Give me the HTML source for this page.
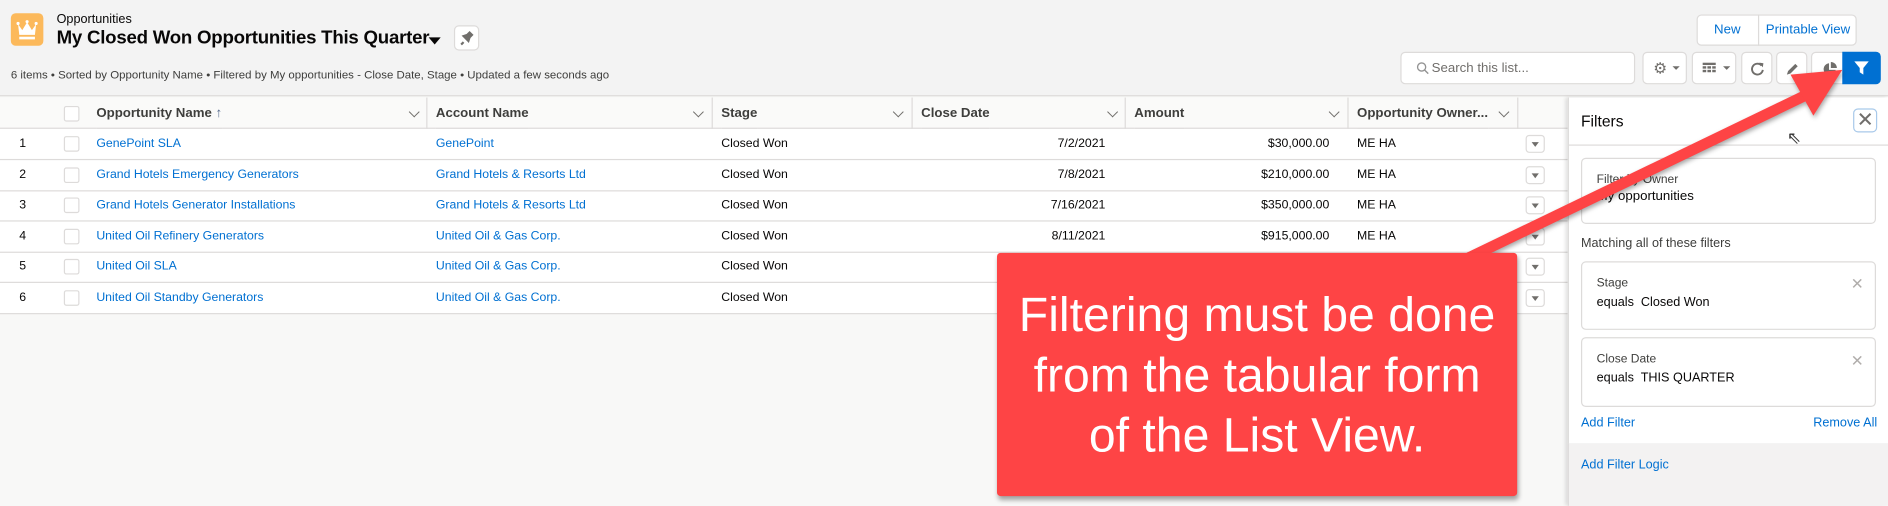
<!DOCTYPE html>
<html><head><meta charset="utf-8"><style>
*{box-sizing:border-box;margin:0;padding:0}
html,body{width:1888px;height:505px;overflow:hidden;background:#f8f8f7}
#w{position:absolute;left:0;top:0;width:1568px;height:420px;transform:scale(1.2041);transform-origin:0 0;font-family:"Liberation Sans",sans-serif;color:#080707;font-size:10.5px;background:#f8f8f7}
.a{position:absolute}
.hdr{left:0;top:0;width:1568px;height:80px;background:#f3f3f3;border-bottom:1px solid #dddbda}
.btn{position:absolute;background:#fff;border:1px solid #dddbda;border-radius:4px}
.lnk{color:#0070d2}
.tbl{left:0;top:81px;width:1302px;height:180px;background:#fff}
.th{position:absolute;top:0;height:26px;background:#fafaf9;border-bottom:1px solid #dddbda;font-weight:bold;color:#3e3e3c;font-size:11px;line-height:26px}
.row{position:absolute;left:0;width:1302px;height:26px;border-bottom:1px solid #dddbda;line-height:25px;font-size:10.2px}
.cb{position:absolute;left:53px;top:6px;width:13px;height:13px;border:1px solid #dddbda;border-radius:2px;background:#fff}
.dd{position:absolute;left:1267px;top:5px;width:16px;height:15px;border:1px solid #dddbda;border-radius:3px;background:#fff}
.dd:after{content:"";position:absolute;left:4px;top:5px;border-left:3.5px solid transparent;border-right:3.5px solid transparent;border-top:4px solid #706e6b}
.card{position:absolute;left:1313px;width:245px;background:#fff;border:1px solid #dddbda;border-radius:4px;padding:0 12px}
.chev{position:absolute;top:8px;width:8px;height:8px;border-right:1.2px solid #706e6b;border-bottom:1.2px solid #706e6b;transform:rotate(45deg) scale(.8)}
.sep{position:absolute;top:0;width:1px;height:26px;background:#dddbda}
</style></head><body><div id="w">
<div class="a hdr"></div>
<div class="a" style="left:9px;top:11px;width:27px;height:27px;background:#fcb95b;border-radius:4px">
<svg width="27" height="27" viewBox="0 0 27 27"><path d="M6 9 L9.5 14 L13.5 7.5 L17.5 14 L21 9 L20 18 L7 18 Z" fill="#fff"/><rect x="7" y="19.5" width="13" height="2.2" fill="#fff"/><circle cx="6" cy="8.5" r="1.3" fill="#fff"/><circle cx="13.5" cy="7" r="1.3" fill="#fff"/><circle cx="21" cy="8.5" r="1.3" fill="#fff"/></svg></div>
<div class="a" style="left:47px;top:10px;font-size:10.5px">Opportunities</div>
<div class="a" style="left:47px;top:23px;font-size:15.5px;font-weight:bold;letter-spacing:-.2px">My Closed Won Opportunities This Quarter</div>
<div class="a" style="left:356px;top:31px;border-left:5px solid transparent;border-right:5px solid transparent;border-top:6px solid #080707"></div>
<div class="btn" style="left:377px;top:21px;width:21px;height:21px"><svg width="19" height="19" viewBox="0 0 19 19"><path d="M7 13 L5 15 M7 8 L11 12 L12 9 L14 7 L12 5 L10 7 Z" stroke="#706e6b" stroke-width="1.8" fill="#706e6b"/></svg></div>
<div class="a" style="left:9px;top:57px;font-size:9.5px;color:#3e3e3c">6 items • Sorted by Opportunity Name • Filtered by My opportunities - Close Date, Stage • Updated a few seconds ago</div>
<div class="btn" style="left:1409px;top:12px;width:133px;height:26px"></div>
<div class="a" style="left:1460px;top:12px;width:1px;height:26px;background:#dddbda"></div>
<div class="a lnk" style="left:1409px;top:19px;width:51px;text-align:center;font-size:11px">New</div>
<div class="a lnk" style="left:1461px;top:19px;width:81px;text-align:center;font-size:11px">Printable View</div>
<div class="btn" style="left:1163px;top:43px;width:195px;height:27px"></div>
<svg class="a" style="left:1176px;top:51px" width="11" height="11" viewBox="0 0 13 13"><circle cx="5.5" cy="5.5" r="4" stroke="#939393" stroke-width="1.3" fill="none"/><path d="M8.5 8.5 L12 12" stroke="#939393" stroke-width="1.4"/></svg>
<div class="a" style="left:1189px;top:51px;font-size:11px;color:#706e6b">Search this list...</div>
<div class="btn" style="left:1364px;top:43px;width:37px;height:27px"><span class="a" style="left:8px;top:5px;font-size:13px;color:#706e6b">⚙</span><span class="a" style="left:24px;top:11px;border-left:3px solid transparent;border-right:3px solid transparent;border-top:3px solid #706e6b"></span></div>
<div class="btn" style="left:1405px;top:43px;width:37px;height:27px"><svg class="a" style="left:8px;top:8px" width="11" height="10"><g fill="#706e6b"><rect x="0" y="0" width="11" height="2"/><rect x="0" y="3" width="3" height="2"/><rect x="4" y="3" width="3" height="2"/><rect x="8" y="3" width="3" height="2"/><rect x="0" y="6" width="3" height="2"/><rect x="4" y="6" width="3" height="2"/><rect x="8" y="6" width="3" height="2"/></g></svg><span class="a" style="left:25px;top:11px;border-left:3px solid transparent;border-right:3px solid transparent;border-top:3px solid #706e6b"></span></div>
<div class="btn" style="left:1446px;top:43px;width:26px;height:27px"><svg class="a" style="left:6px;top:7px" width="13" height="13" viewBox="0 0 13 13"><path d="M10 3.5 A4.5 4.5 0 1 0 11 7" stroke="#706e6b" stroke-width="1.6" fill="none"/><path d="M8 1 L11.5 1.5 L11 5 Z" fill="#706e6b"/></svg></div>
<div class="btn" style="left:1475px;top:43px;width:26px;height:27px"><svg class="a" style="left:7px;top:7px" width="12" height="12"><path d="M1 11 L2 8 L8 2 L10 4 L4 10 Z" fill="#706e6b"/></svg></div>
<div class="btn" style="left:1504px;top:43px;width:30px;height:27px"><svg class="a" style="left:8px;top:7px" width="13" height="13"><path d="M6 1.5 A5 5 0 1 0 11.5 7 L6 7 Z" fill="#706e6b"/><path d="M7.5 0.5 A5 5 0 0 1 12.5 5.5 L7.5 5.5 Z" fill="#706e6b"/></svg></div>
<div class="a" style="left:1530px;top:43px;width:32px;height:27px;background:#0070d2;border-radius:0 4px 4px 0"><svg class="a" style="left:10px;top:7px" width="12" height="13"><path d="M0 1 L12 1 L7.5 6.5 L7.5 12 L4.5 10 L4.5 6.5 Z" fill="#fff"/></svg></div>

<div class="a tbl">
<div class="th" style="left:0;width:1302px"></div>
<div class="cb" style="top:7px"></div>
<div class="th" style="left:80px">Opportunity Name <span style="color:#54698d">↑</span></div><div class="chev" style="left:340px"></div><div class="sep" style="left:354px"></div>
<div class="th" style="left:362px">Account Name</div><div class="chev" style="left:576px"></div><div class="sep" style="left:591px"></div>
<div class="th" style="left:599px">Stage</div><div class="chev" style="left:742px"></div><div class="sep" style="left:757px"></div>
<div class="th" style="left:765px">Close Date</div><div class="chev" style="left:920px"></div><div class="sep" style="left:934px"></div>
<div class="th" style="left:942px">Amount</div><div class="chev" style="left:1104px"></div><div class="sep" style="left:1119px"></div>
<div class="th" style="left:1127px">Opportunity Owner...</div><div class="chev" style="left:1245px"></div><div class="sep" style="left:1260px"></div>
</div>
<div class="a" style="left:0;top:107px;width:1302px">
<div class="row" style="top:0"><span class="a" style="left:16px">1</span><div class="cb"></div><span class="a lnk" style="left:80px">GenePoint SLA</span><span class="a lnk" style="left:362px">GenePoint</span><span class="a" style="left:599px">Closed Won</span><span class="a" style="right:384px">7/2/2021</span><span class="a" style="right:198px">$30,000.00</span><span class="a" style="left:1127px">ME HA</span><div class="dd"></div></div>
<div class="row" style="top:25.5px"><span class="a" style="left:16px">2</span><div class="cb"></div><span class="a lnk" style="left:80px">Grand Hotels Emergency Generators</span><span class="a lnk" style="left:362px">Grand Hotels &amp; Resorts Ltd</span><span class="a" style="left:599px">Closed Won</span><span class="a" style="right:384px">7/8/2021</span><span class="a" style="right:198px">$210,000.00</span><span class="a" style="left:1127px">ME HA</span><div class="dd"></div></div>
<div class="row" style="top:51px"><span class="a" style="left:16px">3</span><div class="cb"></div><span class="a lnk" style="left:80px">Grand Hotels Generator Installations</span><span class="a lnk" style="left:362px">Grand Hotels &amp; Resorts Ltd</span><span class="a" style="left:599px">Closed Won</span><span class="a" style="right:384px">7/16/2021</span><span class="a" style="right:198px">$350,000.00</span><span class="a" style="left:1127px">ME HA</span><div class="dd"></div></div>
<div class="row" style="top:76.5px"><span class="a" style="left:16px">4</span><div class="cb"></div><span class="a lnk" style="left:80px">United Oil Refinery Generators</span><span class="a lnk" style="left:362px">United Oil &amp; Gas Corp.</span><span class="a" style="left:599px">Closed Won</span><span class="a" style="right:384px">8/11/2021</span><span class="a" style="right:198px">$915,000.00</span><span class="a" style="left:1127px">ME HA</span><div class="dd"></div></div>
<div class="row" style="top:102px"><span class="a" style="left:16px">5</span><div class="cb"></div><span class="a lnk" style="left:80px">United Oil SLA</span><span class="a lnk" style="left:362px">United Oil &amp; Gas Corp.</span><span class="a" style="left:599px">Closed Won</span><div class="dd"></div></div>
<div class="row" style="top:127.5px"><span class="a" style="left:16px">6</span><div class="cb"></div><span class="a lnk" style="left:80px">United Oil Standby Generators</span><span class="a lnk" style="left:362px">United Oil &amp; Gas Corp.</span><span class="a" style="left:599px">Closed Won</span><div class="dd"></div></div>
</div>

<div class="a" style="left:1302px;top:81px;width:266px;height:339px;background:#fff;border-left:1px solid #dddbda;box-shadow:-2px 0 3px rgba(0,0,0,.12)"></div>
<div class="a" style="left:1302px;top:368px;width:266px;height:52px;background:#f3f2f2;border-left:1px solid #dddbda"></div>
<div class="a" style="left:1313px;top:93px;font-size:13px">Filters</div>
<div class="a" style="left:1303px;top:120px;width:265px;height:1px;background:#dddbda"></div>
<div class="a" style="left:1539px;top:90px;width:20px;height:20px;border:1px solid #a8c9ea;border-radius:4px;background:#fff;color:#706e6b;font-size:17px;line-height:17px;text-align:center">✕</div>
<div class="card" style="top:131px;height:55px"><div style="margin-top:12px;font-size:10px;color:#3e3e3c">Filter by Owner</div><div style="margin-top:2px;font-size:11px">My opportunities</div></div>
<div class="a" style="left:1313px;top:196px;font-size:10.5px;color:#3e3e3c">Matching all of these filters</div>
<div class="card" style="top:217px;height:57px"><div style="margin-top:12px;font-size:10px;color:#3e3e3c">Stage</div><div style="margin-top:4px;font-size:10.5px">equals&nbsp; Closed Won</div><span class="a" style="left:223px;top:10px;color:#b0adab;font-size:13px">✕</span></div>
<div class="card" style="top:280px;height:58px"><div style="margin-top:12px;font-size:10px;color:#3e3e3c">Close Date</div><div style="margin-top:4px;font-size:10.5px">equals&nbsp; THIS QUARTER</div><span class="a" style="left:223px;top:11px;color:#b0adab;font-size:13px">✕</span></div>
<div class="a lnk" style="left:1313px;top:345px;font-size:10.5px">Add Filter</div>
<div class="a lnk" style="left:1500px;top:345px;width:59px;text-align:right;font-size:10.5px">Remove All</div>
<div class="a lnk" style="left:1313px;top:380px;font-size:10.5px">Add Filter Logic</div>
<div class="a" style="left:1484px;top:106px;font-size:14px;color:#333">⇖</div>

<svg class="a" style="left:0;top:0;filter:drop-shadow(1px 2px 2px rgba(0,0,0,.35))" width="1568" height="420"><path d="M1220 214 L1502 78" stroke="#fe4445" stroke-width="9"/><path d="M1530 58 L1487 62 L1506 96 Z" fill="#fe4445"/></svg>
<div class="a" style="left:828px;top:210px;width:432px;height:202px;background:#fe4445;border-radius:3px;box-shadow:1px 3px 4px rgba(0,0,0,.35);color:#fff;font-size:40px;line-height:50px;text-align:center;padding-top:27px">Filtering must be done<br>from the tabular form<br>of the List View.</div>
</div></body></html>
